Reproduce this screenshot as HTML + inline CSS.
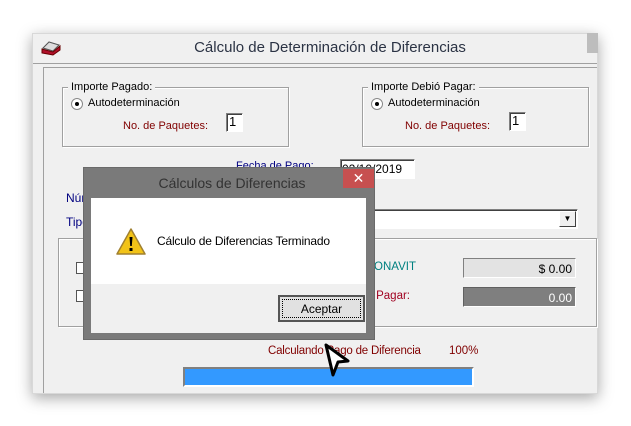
<!DOCTYPE html>
<html><head><meta charset="utf-8"><style>
*{margin:0;padding:0;box-sizing:border-box}
body{width:631px;height:426px;background:#fff;position:relative;overflow:hidden;font-family:"Liberation Sans",sans-serif;font-size:11px;color:#000}
.a{position:absolute}
.grp{position:absolute;border:1px solid #a0a0a0;box-shadow:1px 1px 0 #fff inset,1px 1px 0 #fff}
.leg{position:absolute;background:#f0f0f0;padding:0 3px;top:-7px;font-size:11px}
.tb{position:absolute;background:#fff;border:1px solid;border-color:#808080 #fff #fff #808080;box-shadow:inset 1px 1px 0 #404040}
.radio{position:absolute;width:12px;height:12px;border-radius:50%;background:#fff;border:1px solid #888}
.radio:after{content:"";position:absolute;left:3px;top:3px;width:4px;height:4px;border-radius:50%;background:#000}
.chk{position:absolute;width:12px;height:12px;background:#fff;border:1px solid #555}
</style></head><body>
<div class="a" style="left:32px;top:33px;width:566px;height:361px;background:#f0f0f0;border:1px solid #d8d8d8;box-shadow:0 4px 14px rgba(0,0,0,.35)"></div>
<div class="a" style="left:587px;top:33px;width:11px;height:20px;background:#bdbdbd"></div>
<svg class="a" style="left:40px;top:40px" width="22" height="16" viewBox="0 0 22 16"><path d="M3 8 L9 2 L19 5 L13 11 Z" fill="#ddd" stroke="#555"/><path d="M2 9 L13 12 L20 6 L20 10 L13 15 L2 13Z" fill="#b0102a" stroke="#600"/></svg>
<div class="a" style="left:120px;top:39px;width:420px;text-align:center;font-size:15px;color:#2b3344">Cálculo de Determinación de Diferencias</div>
<div class="a" style="left:33px;top:63px;width:564px;height:1px;background:#fff;border-top:1px solid #a0a0a0"></div>
<div class="a" style="left:43px;top:67px;width:554px;height:326px;border-left:1px solid #a0a0a0;border-top:1px solid #a0a0a0"></div>

<div class="grp" style="left:62px;top:87px;width:227px;height:60px"><div class="leg" style="left:5px">Importe Pagado:</div></div>
<div class="radio" style="left:71px;top:98px"></div>
<div class="a" style="left:88px;top:97px;font-size:11px">Autodeterminación</div>
<div class="a" style="left:123px;top:120px;color:#800000;font-size:11px">No. de Paquetes:</div>
<div class="tb" style="left:226px;top:113px;width:17px;height:19px;font-size:13px;padding-left:2px">1</div>

<div class="grp" style="left:362px;top:87px;width:227px;height:60px"><div class="leg" style="left:5px">Importe Debió Pagar:</div></div>
<div class="radio" style="left:371px;top:98px"></div>
<div class="a" style="left:388px;top:97px;font-size:11px">Autodeterminación</div>
<div class="a" style="left:405px;top:120px;color:#800000;font-size:11px">No. de Paquetes:</div>
<div class="tb" style="left:509px;top:112px;width:17px;height:19px;font-size:13px;padding-left:2px">1</div>

<div class="a" style="left:236px;top:160px;color:#000080">Fecha de Pago:</div>
<div class="tb" style="left:340px;top:159px;width:75px;height:20px;font-size:12px;padding:2px 1px">02/10/2019</div>
<div class="a" style="left:66px;top:191px;color:#000080;font-size:12px">Núm</div>
<div class="a" style="left:66px;top:215px;color:#000080;font-size:12px">Tipo</div>
<div class="tb" style="left:360px;top:209px;width:218px;height:20px"></div>
<div class="a" style="left:559px;top:211px;width:17px;height:16px;background:#f0f0f0;border:1px solid;border-color:#fff #404040 #404040 #fff;font-size:8px;text-align:center;line-height:14px">▼</div>

<div class="grp" style="left:58px;top:238px;width:539px;height:89px"></div>
<div class="chk" style="left:76px;top:262px"></div>
<div class="chk" style="left:76px;top:290px"></div>
<div class="a" style="left:300px;width:116px;text-align:right;top:261px;color:#008080;font-size:11.5px">INFONAVIT</div>
<div class="a" style="left:300px;width:110px;text-align:right;top:290px;color:#a00020;font-size:11.5px">Pagar:</div>
<div class="a" style="left:463px;top:258px;width:113px;height:20px;background:#e3e3e3;border:1px solid;border-color:#808080 #fff #fff #808080;text-align:right;padding:3px 3px;font-size:12px">$ 0.00</div>
<div class="a" style="left:463px;top:287px;width:113px;height:20px;background:#7f7f7f;border:1px solid;border-color:#606060 #fff #fff #606060;text-align:right;padding:3px 3px;font-size:12px;color:#fff">0.00</div>

<div class="a" style="left:268px;top:345px;color:#800000;font-size:11.5px;letter-spacing:-0.2px">Calculando Pago de Diferencia</div>
<div class="a" style="left:449px;top:345px;color:#800000;font-size:11.5px">100%</div>
<div class="a" style="left:183px;top:367px;width:291px;height:20px;background:#3399ff;border:2px solid;border-color:#808080 #fff #fff #808080"></div>

<div class="a" style="left:83px;top:167px;width:292px;height:173px;background:#7a7a7a;border:1px solid #6a6a6a"></div>
<div class="a" style="left:83px;top:175px;width:298px;text-align:center;font-size:14px;color:#333">Cálculos de Diferencias</div>
<div class="a" style="left:343px;top:169px;width:31px;height:19px;background:#c75050;color:#fff;text-align:center;font-size:14px;line-height:18px">✕</div>
<div class="a" style="left:91px;top:198px;width:275px;height:86px;background:#fff"></div>
<div class="a" style="left:91px;top:284px;width:275px;height:49px;background:#f0f0f0"></div>
<svg class="a" style="left:115px;top:227px" width="32" height="30" viewBox="0 0 32 30"><path d="M16 2 L30 27 L2 27 Z" fill="#f2c318" stroke="#a08030" stroke-width="1.5" stroke-linejoin="round"/><path d="M14.5 10 h3 l-0.7 9 h-1.6z" fill="#000"/><rect x="14.5" y="21" width="3" height="3" fill="#000"/></svg>
<div class="a" style="left:157px;top:234px;font-size:12px;color:#000;letter-spacing:-0.2px">Cálculo de Diferencias Terminado</div>
<div class="a" style="left:278px;top:295px;width:87px;height:27px;background:#e1e1e1;border:2px solid #555;"><div style="position:absolute;left:2px;top:2px;right:2px;bottom:2px;border:1px dotted #000;text-align:center;font-size:12px;line-height:18px">Aceptar</div></div>

<svg class="a" style="left:322px;top:343px" width="30" height="36" viewBox="0 0 30 36"><path d="M4 2 L26 18 L16 19 L11 32 Z" fill="#fff" stroke="#000" stroke-width="3" stroke-linejoin="round"/></svg>
</body></html>
